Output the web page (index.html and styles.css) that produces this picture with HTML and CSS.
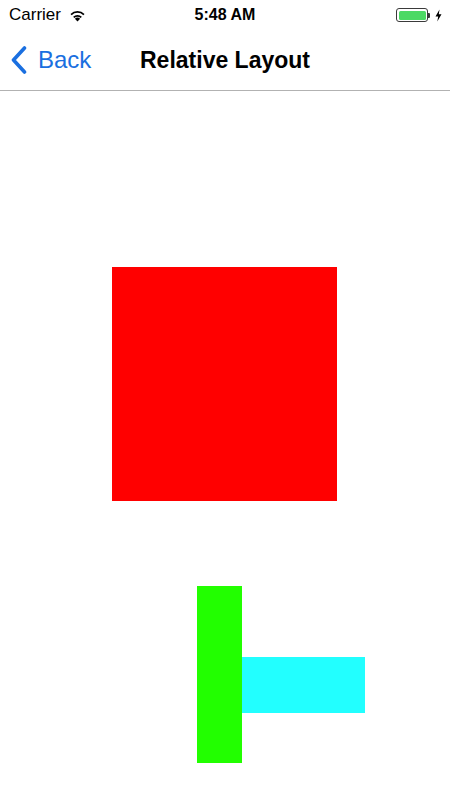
FILE: index.html
```html
<!DOCTYPE html>
<html>
<head>
<meta charset="utf-8">
<link rel="stylesheet" href="styles.css">
</head>
<body>
<div class="status">
  <div class="status-left">
    <span class="carrier">Carrier</span>
    <svg class="wifi" width="17" height="13" viewBox="0 0 18 14">
      <path d="M9 13.5 L6.2 10.4 A4 4 0 0 1 11.8 10.4 Z" fill="#000"/>
      <path d="M4.3 8.4 A6.8 6.8 0 0 1 13.7 8.4 L12.4 9.8 A5 5 0 0 0 5.6 9.8 Z" fill="#000"/>
      <path d="M1.4 5.3 A10.8 10.8 0 0 1 16.6 5.3 L15.3 6.7 A9 9 0 0 0 2.7 6.7 Z" fill="#000"/>
    </svg>
  </div>
  <span class="time">5:48 AM</span>
  <div class="status-right">
    <div class="battery"><div class="battery-fill"></div></div>
    <div class="battery-tip"></div>
    <svg class="bolt" width="7" height="13" viewBox="0 0 7 12">
      <path d="M4.5 0 L0.5 7 L3.2 7 L2.3 12 L6.5 4.8 L3.8 4.8 Z" fill="#000"/>
    </svg>
  </div>
</div>
<div class="nav">
  <div class="back">
    <svg class="chevron" width="16" height="28" viewBox="0 0 16 28">
      <path d="M13.5 2 L2.5 14 L13.5 26" fill="none" stroke="#1a6fe0" stroke-width="3.6" stroke-linecap="round" stroke-linejoin="round"/>
    </svg>
    <span class="back-text">Back</span>
  </div>
  <div class="title">Relative Layout</div>
</div>
<div class="content">
  <div class="red"></div>
  <div class="group">
    <div class="green"></div>
    <div class="cyan"></div>
  </div>
</div>
</body>
</html>
```
FILE: styles.css
```css
html, body {
  margin: 0;
  padding: 0;
  background: #fff;
  font-family: "Liberation Sans", Arial, sans-serif;
}
.status {
  height: 30px;
  display: flex;
  align-items: center;
  justify-content: space-between;
  padding: 0 8px 0 9px;
  position: relative;
  color: #000;
}
.status-left {
  display: flex;
  align-items: center;
  gap: 8px;
}
.carrier {
  font-size: 17px;
}
.time {
  position: absolute;
  left: 0;
  right: 0;
  text-align: center;
  font-size: 16px;
  font-weight: bold;
}
.status-right {
  display: flex;
  align-items: center;
}
.battery {
  width: 32px;
  height: 14px;
  border: 1px solid #3a3a3a;
  border-radius: 3px;
  padding: 1.5px;
  box-sizing: border-box;
  display: flex;
}
.battery-fill {
  flex: 1;
  background: #4cd964;
  border-radius: 1.5px;
}
.battery-tip {
  width: 2px;
  height: 5px;
  background: #3a3a3a;
  border-radius: 0 1px 1px 0;
  margin-right: 5px;
}
.bolt {
  display: block;
}
.nav {
  height: 60px;
  border-bottom: 1px solid #b2b2b2;
  display: flex;
  align-items: center;
  position: relative;
}
.back {
  display: flex;
  align-items: center;
  padding-left: 11px;
  gap: 11px;
}
.chevron {
  display: block;
}
.back-text {
  color: #1a6fe0;
  font-size: 24px;
}
.title {
  position: absolute;
  left: 0;
  right: 0;
  text-align: center;
  font-size: 23px;
  font-weight: bold;
  pointer-events: none;
}
.content {
  padding-top: 176px;
}
.red {
  width: 225px;
  height: 234px;
  margin-left: 112px;
  background: #ff0000;
}
.group {
  display: flex;
  align-items: flex-start;
  margin-top: 85px;
  margin-left: 197px;
}
.green {
  width: 45px;
  height: 177px;
  background: #22ff00;
}
.cyan {
  width: 123px;
  height: 56px;
  margin-top: 71px;
  background: #22ffff;
}
```
